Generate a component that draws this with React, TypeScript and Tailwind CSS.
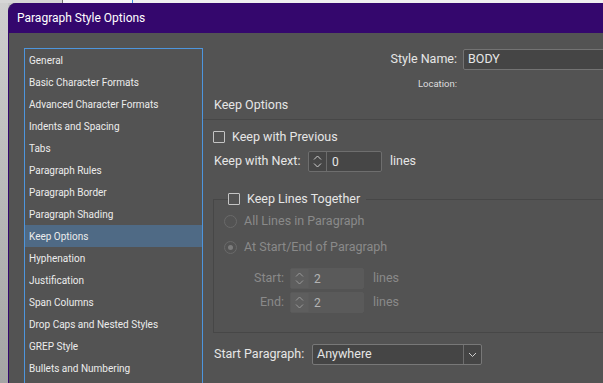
import React from "react";

const sections = [
  "General",
  "Basic Character Formats",
  "Advanced Character Formats",
  "Indents and Spacing",
  "Tabs",
  "Paragraph Rules",
  "Paragraph Border",
  "Paragraph Shading",
  "Keep Options",
  "Hyphenation",
  "Justification",
  "Span Columns",
  "Drop Caps and Nested Styles",
  "GREP Style",
  "Bullets and Numbering",
];

const Stepper = ({ disabled }: { disabled?: boolean }) => (
  <div
    className={
      "flex h-full w-[18px] flex-col items-center justify-center border-r " +
      (disabled ? "border-[#5c5c5c] bg-[#5e5e5e]" : "border-[#6c6c6c]")
    }
  >
    <svg width="9" height="15" viewBox="0 0 9 15" fill="none">
      <path d="M1 5.5 L4.5 2 L8 5.5" stroke={disabled ? "#9a9a9a" : "#cfcfcf"} strokeWidth="1" />
      <path d="M1 9.5 L4.5 13 L8 9.5" stroke={disabled ? "#9a9a9a" : "#cfcfcf"} strokeWidth="1" />
    </svg>
  </div>
);

const Spinner = ({ value, disabled }: { value: string; disabled?: boolean }) => (
  <div
    className={
      "flex h-[21px] w-[74px] items-center rounded-[2px] border " +
      (disabled ? "border-[#5a5a5a] bg-[#5a5a5a]" : "border-[#6e6e6e] bg-[#464646]")
    }
  >
    <Stepper disabled={disabled} />
    <span className={"pl-[5px] text-[12px] " + (disabled ? "text-[#b4b4b4]" : "text-[#e6e6e6]")}>{value}</span>
  </div>
);

const Checkbox = () => <div className="h-[12px] w-[12px] shrink-0 rounded-[1px] border border-[#c4c4c4]" />;

const Radio = ({ checked }: { checked?: boolean }) => (
  <div className="flex h-[13px] w-[13px] shrink-0 items-center justify-center rounded-full border border-[#6a6a6a]">
    {checked && <div className="h-[5px] w-[5px] rounded-full bg-[#7c7c7c]" />}
  </div>
);

export default function App() {
  return (
    <div
      className="flex h-[383px] w-[603px] flex-col overflow-hidden whitespace-nowrap bg-[#c6c6c6] text-[#e6e6e6]"
      style={{ fontFamily: 'Roboto, "Noto Sans", sans-serif' }}
    >
      <div className="flex h-[3px] shrink-0">
        <div className="w-[62px] bg-[#d6d6d6]" />
        <div className="w-[1px] bg-[#707070]" />
        <div className="w-[69px] bg-[#f4f4f4]" />
        <div className="w-[1px] bg-[#3c8ee0]" />
        <div className="flex-1 bg-[#efefef]" />
      </div>
      <div className="flex min-h-0 flex-1">
        <div className="w-[8px] shrink-0 bg-gradient-to-b from-[#cfcfcf] to-[#a4a4a4]" />
        <div className="flex min-w-0 flex-1 flex-col overflow-hidden rounded-tl-[8px] border-l border-[#33066c] bg-[#535353]">
          <div className="flex h-[30px] shrink-0 items-center bg-[#34076d] pl-[8px] text-[12px] text-white">
            Paragraph Style Options
          </div>
          <div className="flex min-h-0 flex-1">
            <div className="shrink-0 pl-[15px] pt-[15px]">
              <div className="h-[400px] w-[179px] border border-[#4d95dd]">
                {sections.map((s) => (
                  <div
                    key={s}
                    className={
                      "flex h-[22px] items-center pl-[4px] text-[10px] text-[#ececec] " +
                      (s === "Keep Options" ? "bg-[#4f6a85]" : "")
                    }
                  >
                    {s}
                  </div>
                ))}
              </div>
            </div>
            <div className="flex min-w-0 flex-1 flex-col text-[12.5px]">
              <div className="mt-[16px] flex h-[21px] items-center justify-end">
                <span>Style Name:</span>
                <div className="ml-[6px] mr-[-12px] flex h-[21px] w-[152px] items-center rounded-[2px] border border-[#737373] bg-[#454545] pl-[4px] text-[12.5px]">
                  BODY
                </div>
              </div>
              <div className="mt-[8px] flex h-[12px] items-center justify-end pr-[146px] text-[9.5px] text-[#dedede]">
                Location:
              </div>
              <div className="ml-[11px] mt-[7px] flex h-[16px] items-center">Keep Options</div>
              <div className="mt-[6px] h-[1px] bg-[#474747]" />
              <div className="ml-[10px] mt-[9px] flex h-[16px] items-center gap-[7px]">
                <Checkbox />
                <span>Keep with Previous</span>
              </div>
              <div className="ml-[11px] mt-[6px] flex h-[21px] items-center">
                <span className="w-[94px]">Keep with Next:</span>
                <Spinner value="0" />
                <span className="ml-[8px]">lines</span>
              </div>
              <div className="ml-[10px] mr-[-10px] mt-[27px] h-[134px] border border-[#474747]">
                <div className="-mt-[9px] ml-[14px] flex h-[16px] w-fit items-center gap-[7px] bg-[#535353] pr-[6px]">
                  <Checkbox />
                  <span>Keep Lines Together</span>
                </div>
                <div className="ml-[10px] mt-[6px] flex h-[16px] items-center gap-[7px] text-[#8a8a8a]">
                  <Radio />
                  <span>All Lines in Paragraph</span>
                </div>
                <div className="ml-[10px] mt-[10px] flex h-[16px] items-center gap-[7px] text-[#8a8a8a]">
                  <Radio checked />
                  <span>At Start/End of Paragraph</span>
                </div>
                <div className="mt-[13px] flex h-[21px] items-center text-[#8a8a8a]">
                  <span className="w-[76px] pr-[6px] text-right">Start:</span>
                  <Spinner value="2" disabled />
                  <span className="ml-[9px]">lines</span>
                </div>
                <div className="mt-[3px] flex h-[21px] items-center text-[#8a8a8a]">
                  <span className="w-[76px] pr-[6px] text-right">End:</span>
                  <Spinner value="2" disabled />
                  <span className="ml-[9px]">lines</span>
                </div>
              </div>
              <div className="ml-[11px] mt-[11px] flex h-[21px] items-center">
                <span className="w-[98px]">Start Paragraph:</span>
                <div className="flex h-[21px] w-[170px] items-center rounded-[2px] border border-[#787878] bg-[#454545]">
                  <span className="flex-1 pl-[4px]">Anywhere</span>
                  <div className="flex h-full w-[18px] items-center justify-center border-l border-[#6e6e6e]">
                    <svg width="9" height="6" viewBox="0 0 9 6" fill="none">
                      <path d="M1 1 L4.5 4.5 L8 1" stroke="#cfcfcf" strokeWidth="1" />
                    </svg>
                  </div>
                </div>
              </div>
            </div>
          </div>
        </div>
      </div>
    </div>
  );
}
